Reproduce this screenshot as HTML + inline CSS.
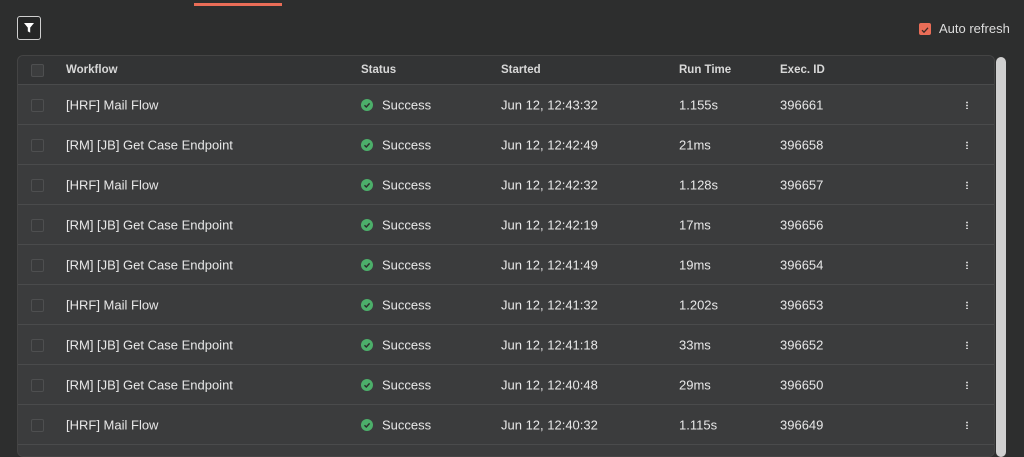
<!DOCTYPE html><html><head><style>
body{margin:0;width:1024px;height:447px;overflow:hidden;background:#2d2e2e;font-family:"Liberation Sans",sans-serif;color:#e6e6e6;position:relative}
.tab{position:absolute;left:194px;top:3px;width:88px;height:3px;background:#ea6d57}
.filter{position:absolute;left:17px;top:16px;width:24px;height:24px;border:1px solid #cfcfcf;border-radius:3px;box-sizing:border-box;background:#252626}
.ar{position:absolute;left:919px;top:23px;width:12px;height:12px;background:#ea6d57;border-radius:2px}
.art{position:absolute;left:939px;top:21px;font-size:13px;color:#ddd}
.tbl{position:absolute;left:17px;top:55px;width:976px;height:400px;border:1px solid #444;border-radius:6px;overflow:hidden;background:#3b3c3d}
.hd{height:28px;background:#333435;border-bottom:1px solid #4a4b4c;position:relative;font-size:11.5px;font-weight:bold;color:#d8d8d8}
.r{height:39px;border-bottom:1px solid #4a4b4c;position:relative;font-size:13px;color:#e8e8e8}
.c{position:absolute;top:50%;transform:translateY(-50%)}
.cb{position:absolute;left:13px;top:50%;margin-top:-6px;width:11px;height:11px;border:1px solid #4e4f50;border-radius:2px;background:#3a3b3c}
.ok{position:absolute;left:343px;top:50%;margin-top:-6px;width:12px;height:12px;border-radius:50%;background:#4caf6a}
.dots{position:absolute;left:948px;top:50%;margin-top:-4px;width:2px;height:8px;background:radial-gradient(circle,#ccc 0.9px,transparent 1px) 0 0/2px 3px}
.sb{position:absolute;left:996px;top:57px;width:10px;height:400px;background:#d0d0d0;border-radius:5px}
</style></head><body>
<div class="tab"></div>
<div class="filter"><svg width="22" height="22" viewBox="0 0 22 22"><path d="M6 6h10l-3.8 4.6v5l-2.4-1.2v-3.8z" fill="#fff"/></svg></div>
<div class="ar"><svg width="12" height="12"><path d="M3 6.2l2 2 4-4.4" stroke="#3a2a26" stroke-width="1.3" fill="none"/></svg></div>
<div class="art">Auto refresh</div>
<div class="tbl">
<div class="hd"><div class="cb" style="background:#3c3d3e"></div><span class="c" style="left:48px">Workflow</span><span class="c" style="left:343px">Status</span><span class="c" style="left:483px">Started</span><span class="c" style="left:661px">Run Time</span><span class="c" style="left:762px">Exec. ID</span></div>
<div class="r"><div class="cb"></div><span class="c" style="left:48px">[HRF] Mail Flow</span><div class="ok"><svg width="12" height="12"><path d="M3.5 6.2l1.8 1.8 3.3-3.6" stroke="#2d2e2e" stroke-width="1.4" fill="none"/></svg></div><span class="c" style="left:364px">Success</span><span class="c" style="left:483px">Jun 12, 12:43:32</span><span class="c" style="left:661px">1.155s</span><span class="c" style="left:762px">396661</span><div class="dots"></div></div>
<div class="r"><div class="cb"></div><span class="c" style="left:48px">[RM] [JB] Get Case Endpoint</span><div class="ok"><svg width="12" height="12"><path d="M3.5 6.2l1.8 1.8 3.3-3.6" stroke="#2d2e2e" stroke-width="1.4" fill="none"/></svg></div><span class="c" style="left:364px">Success</span><span class="c" style="left:483px">Jun 12, 12:42:49</span><span class="c" style="left:661px">21ms</span><span class="c" style="left:762px">396658</span><div class="dots"></div></div>
<div class="r"><div class="cb"></div><span class="c" style="left:48px">[HRF] Mail Flow</span><div class="ok"><svg width="12" height="12"><path d="M3.5 6.2l1.8 1.8 3.3-3.6" stroke="#2d2e2e" stroke-width="1.4" fill="none"/></svg></div><span class="c" style="left:364px">Success</span><span class="c" style="left:483px">Jun 12, 12:42:32</span><span class="c" style="left:661px">1.128s</span><span class="c" style="left:762px">396657</span><div class="dots"></div></div>
<div class="r"><div class="cb"></div><span class="c" style="left:48px">[RM] [JB] Get Case Endpoint</span><div class="ok"><svg width="12" height="12"><path d="M3.5 6.2l1.8 1.8 3.3-3.6" stroke="#2d2e2e" stroke-width="1.4" fill="none"/></svg></div><span class="c" style="left:364px">Success</span><span class="c" style="left:483px">Jun 12, 12:42:19</span><span class="c" style="left:661px">17ms</span><span class="c" style="left:762px">396656</span><div class="dots"></div></div>
<div class="r"><div class="cb"></div><span class="c" style="left:48px">[RM] [JB] Get Case Endpoint</span><div class="ok"><svg width="12" height="12"><path d="M3.5 6.2l1.8 1.8 3.3-3.6" stroke="#2d2e2e" stroke-width="1.4" fill="none"/></svg></div><span class="c" style="left:364px">Success</span><span class="c" style="left:483px">Jun 12, 12:41:49</span><span class="c" style="left:661px">19ms</span><span class="c" style="left:762px">396654</span><div class="dots"></div></div>
<div class="r"><div class="cb"></div><span class="c" style="left:48px">[HRF] Mail Flow</span><div class="ok"><svg width="12" height="12"><path d="M3.5 6.2l1.8 1.8 3.3-3.6" stroke="#2d2e2e" stroke-width="1.4" fill="none"/></svg></div><span class="c" style="left:364px">Success</span><span class="c" style="left:483px">Jun 12, 12:41:32</span><span class="c" style="left:661px">1.202s</span><span class="c" style="left:762px">396653</span><div class="dots"></div></div>
<div class="r"><div class="cb"></div><span class="c" style="left:48px">[RM] [JB] Get Case Endpoint</span><div class="ok"><svg width="12" height="12"><path d="M3.5 6.2l1.8 1.8 3.3-3.6" stroke="#2d2e2e" stroke-width="1.4" fill="none"/></svg></div><span class="c" style="left:364px">Success</span><span class="c" style="left:483px">Jun 12, 12:41:18</span><span class="c" style="left:661px">33ms</span><span class="c" style="left:762px">396652</span><div class="dots"></div></div>
<div class="r"><div class="cb"></div><span class="c" style="left:48px">[RM] [JB] Get Case Endpoint</span><div class="ok"><svg width="12" height="12"><path d="M3.5 6.2l1.8 1.8 3.3-3.6" stroke="#2d2e2e" stroke-width="1.4" fill="none"/></svg></div><span class="c" style="left:364px">Success</span><span class="c" style="left:483px">Jun 12, 12:40:48</span><span class="c" style="left:661px">29ms</span><span class="c" style="left:762px">396650</span><div class="dots"></div></div>
<div class="r"><div class="cb"></div><span class="c" style="left:48px">[HRF] Mail Flow</span><div class="ok"><svg width="12" height="12"><path d="M3.5 6.2l1.8 1.8 3.3-3.6" stroke="#2d2e2e" stroke-width="1.4" fill="none"/></svg></div><span class="c" style="left:364px">Success</span><span class="c" style="left:483px">Jun 12, 12:40:32</span><span class="c" style="left:661px">1.115s</span><span class="c" style="left:762px">396649</span><div class="dots"></div></div>
</div>
<div class="sb"></div>
</body></html>
